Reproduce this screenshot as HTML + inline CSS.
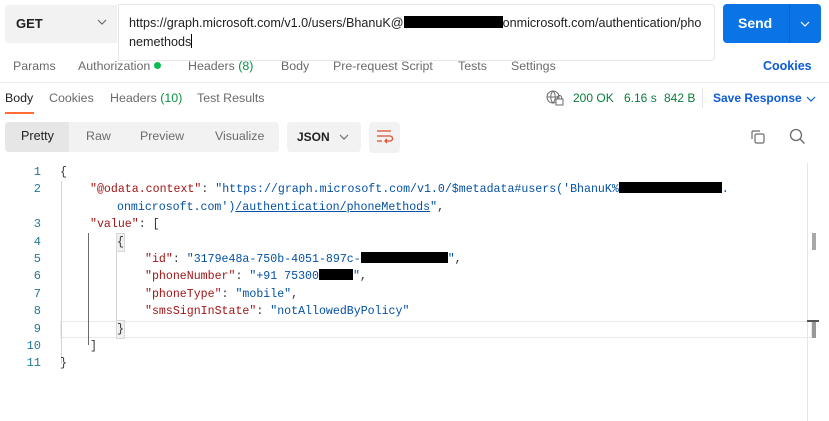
<!DOCTYPE html>
<html><head><meta charset="utf-8"><style>
*{margin:0;padding:0;box-sizing:border-box}
body{width:829px;height:421px;background:#fff;font-family:"Liberation Sans",sans-serif;position:relative;overflow:hidden;color:#212121}
.a{position:absolute;white-space:nowrap}
.t{font-size:12.4px;color:#6b6b6b}
.code{font-family:"Liberation Mono",monospace;font-size:11.6px;line-height:17.4px}
.ln{position:absolute;left:0;width:41px;text-align:right;color:#237893;font-family:"Liberation Mono",monospace;font-size:12px}
.k{color:#a31515}.s{color:#0451a5}.p{color:#333}
.blk{display:inline-block;background:#000;height:11px;vertical-align:-1px}
</style></head><body>
<div class="a" style="left:5px;top:5px;width:112px;height:38px;background:#f2f2f2;border-radius:4px 0 0 4px"></div>
<div class="a" style="left:16px;top:16px;font-size:13px;font-weight:bold;color:#212121">GET</div>
<svg class="a" style="left:97px;top:19px" width="10" height="6"><path d="M1 1l4 4 4-4" stroke="#6b6b6b" fill="none" stroke-width="1.2"/></svg>
<div class="a" style="left:118px;top:4px;width:597px;height:57px;border:1px solid #e6e6e6;border-radius:0 4px 4px 0;background:#fff"></div>
<div class="a" style="left:129px;top:16px;font-size:12.6px;color:#212121">https://graph.microsoft.com/v1.0/users/BhanuK@<span style="display:inline-block;width:99px;height:12px;background:#000;vertical-align:-1px"></span>onmicrosoft.com/authentication/pho</div>
<div class="a" style="left:129px;top:34px;font-size:12.6px;color:#212121">nemethods<span style="display:inline-block;width:1px;height:14px;background:#000;vertical-align:-2px"></span></div>
<div class="a" style="left:723px;top:4px;width:98px;height:39px;background:#0a74e6;border-radius:4px"></div>
<div class="a" style="left:789px;top:4px;width:1px;height:39px;background:#0a63c4"></div>
<div class="a" style="left:738px;top:15px;font-size:14px;font-weight:bold;color:#fff">Send</div>
<svg class="a" style="left:800px;top:21px" width="10" height="6"><path d="M1 1l4 4 4-4" stroke="#fff" fill="none" stroke-width="1.2"/></svg>
<div class="a t" style="left:13px;top:59px">Params</div>
<div class="a t" style="left:78px;top:59px">Authorization <span style="display:inline-block;width:7px;height:7px;border-radius:50%;background:#0cbb52;vertical-align:1px"></span></div>
<div class="a t" style="left:188px;top:59px">Headers <span style="color:#0a8f45">(8)</span></div>
<div class="a t" style="left:281px;top:59px">Body</div>
<div class="a t" style="left:333px;top:59px">Pre-request Script</div>
<div class="a t" style="left:458px;top:59px">Tests</div>
<div class="a t" style="left:511px;top:59px">Settings</div>
<div class="a" style="left:763px;top:59px;font-size:12.5px;font-weight:bold;color:#0b5cd5">Cookies</div>
<div class="a" style="left:0;top:82px;width:829px;height:1px;background:#ededed"></div>
<div class="a" style="left:5px;top:91px;font-size:12.4px;color:#212121">Body</div>
<div class="a" style="left:5px;top:112px;width:29px;height:2px;background:#ff6c37"></div>
<div class="a t" style="left:49px;top:91px">Cookies</div>
<div class="a t" style="left:110px;top:91px">Headers <span style="color:#0a8f45">(10)</span></div>
<div class="a t" style="left:197px;top:91px">Test Results</div>
<svg class="a" style="left:546px;top:90px" width="18" height="16" viewBox="0 0 18 16"><circle cx="7" cy="7" r="6" fill="none" stroke="#6b6b6b"/><path d="M1 7h12M7 1c-3 3-3 9 0 12M7 1c3 3 3 9 0 12" fill="none" stroke="#6b6b6b"/><rect x="10" y="9" width="7" height="6" fill="#fff" stroke="#6b6b6b"/><path d="M11.5 9V7.5a2 2 0 014 0V9" fill="none" stroke="#6b6b6b"/></svg>
<div class="a" style="left:573px;top:91px;font-size:12px;color:#0a7d3a">200 OK</div>
<div class="a" style="left:624px;top:91px;font-size:12px;color:#0a7d3a">6.16 s</div>
<div class="a" style="left:664px;top:91px;font-size:12px;color:#0a7d3a">842 B</div>
<div class="a" style="left:702px;top:88px;width:1px;height:20px;background:#e6e6e6"></div>
<div class="a" style="left:713px;top:91px;font-size:12px;font-weight:bold;color:#0b5cd5">Save Response</div>
<svg class="a" style="left:806px;top:96px" width="10" height="6"><path d="M1 1l4 4 4-4" stroke="#0b5cd5" fill="none" stroke-width="1.2"/></svg>
<div class="a" style="left:5px;top:122px;width:274px;height:30px;background:#f2f2f2;border-radius:4px"></div>
<div class="a" style="left:5px;top:122px;width:64px;height:30px;background:#e6e6e6;border-radius:4px 0 0 4px"></div>
<div class="a" style="left:21px;top:129px;font-size:12.6px;color:#212121">Pretty</div>
<div class="a t" style="left:86px;top:129px">Raw</div>
<div class="a t" style="left:140px;top:129px">Preview</div>
<div class="a t" style="left:215px;top:129px">Visualize</div>
<div class="a" style="left:287px;top:122px;width:74px;height:30px;background:#f2f2f2;border-radius:4px"></div>
<div class="a" style="left:297px;top:130px;font-size:12px;font-weight:bold;color:#212121">JSON</div>
<svg class="a" style="left:339px;top:134px" width="10" height="6"><path d="M1 1l4 4 4-4" stroke="#6b6b6b" fill="none" stroke-width="1.2"/></svg>
<div class="a" style="left:369px;top:122px;width:31px;height:31px;background:#f2f2f2;border-radius:4px"></div>
<svg class="a" style="left:376px;top:129px" width="17" height="16"><path d="M1 2h14M1 7h13a2.5 2.5 0 010 5H9M11 10l-2 2 2 2M1 12h5" stroke="#e0502a" fill="none" stroke-width="1.3"/></svg>
<svg class="a" style="left:750px;top:129px" width="16" height="16"><rect x="5" y="5" width="9" height="9" rx="1.5" fill="none" stroke="#6b6b6b" stroke-width="1.2"/><path d="M2 10V3a1 1 0 011-1h7" fill="none" stroke="#6b6b6b" stroke-width="1.2"/></svg>
<svg class="a" style="left:789px;top:128px" width="17" height="17"><circle cx="7" cy="7" r="5.5" fill="none" stroke="#6b6b6b" stroke-width="1.3"/><path d="M11 11l4.5 4.5" stroke="#6b6b6b" stroke-width="1.3"/></svg>
<div class="a" style="left:60px;top:321px;width:752px;height:17px;border:1px solid #eaeaea"></div>
<div class="a" style="left:61px;top:181px;width:1px;height:183px;background:#d4d4d4"></div>
<div class="a" style="left:88px;top:233px;width:1px;height:112px;background:#6b6b6b"></div>
<div class="a" style="left:116px;top:250px;width:1px;height:72px;background:#d4d4d4"></div>
<div class="a" style="left:807px;top:163px;width:1px;height:258px;background:#e6e6e6"></div>
<div class="a" style="left:812px;top:233px;width:4px;height:17px;background:#a8a8a8"></div>
<div class="a" style="left:807px;top:320px;width:12px;height:2px;background:#555"></div>
<div class="a" style="left:812px;top:322px;width:4px;height:16px;background:#999"></div>
<div class="a code" style="left:0;top:164px;width:829px">
<div style="position:relative;height:17.4px"><span class="ln">1</span><span class="a p" style="left:60px">{</span></div>
<div style="position:relative;height:17.4px"><span class="ln">2</span><span class="a" style="left:90px"><span class="k">"@odata.context"</span><span class="p">: </span><span class="s">"https://graph.microsoft.com/v1.0/$metadata#users('BhanuK%<span class="blk" style="width:103px"></span>.</span></span></div>
<div style="position:relative;height:17.4px"><span class="a" style="left:117px"><span class="s">onmicrosoft.com')<span style="text-decoration:underline">/authentication/phoneMethods</span>"</span><span class="p">,</span></span></div>
<div style="position:relative;height:17.4px"><span class="ln">3</span><span class="a" style="left:90px"><span class="k">"value"</span><span class="p">: [</span></span></div>
<div style="position:relative;height:17.4px"><span class="ln">4</span><span class="a p" style="left:117px;background:#f0f0f0;outline:1px solid #d8d8d8">{</span></div>
<div style="position:relative;height:17.4px"><span class="ln">5</span><span class="a" style="left:145px"><span class="k">"id"</span><span class="p">: </span><span class="s">"3179e48a-750b-4051-897c-<span class="blk" style="width:87px"></span>"</span><span class="p">,</span></span></div>
<div style="position:relative;height:17.4px"><span class="ln">6</span><span class="a" style="left:145px"><span class="k">"phoneNumber"</span><span class="p">: </span><span class="s">"+91 75300<span class="blk" style="width:34px"></span>"</span><span class="p">,</span></span></div>
<div style="position:relative;height:17.4px"><span class="ln">7</span><span class="a" style="left:145px"><span class="k">"phoneType"</span><span class="p">: </span><span class="s">"mobile"</span><span class="p">,</span></span></div>
<div style="position:relative;height:17.4px"><span class="ln">8</span><span class="a" style="left:145px"><span class="k">"smsSignInState"</span><span class="p">: </span><span class="s">"notAllowedByPolicy"</span></span></div>
<div style="position:relative;height:17.4px"><span class="ln">9</span><span class="a p" style="left:117px;background:#f0f0f0;outline:1px solid #d8d8d8">}</span></div>
<div style="position:relative;height:17.4px"><span class="ln">10</span><span class="a p" style="left:90px">]</span></div>
<div style="position:relative;height:17.4px"><span class="ln">11</span><span class="a p" style="left:60px">}</span></div>
</div>
</body></html>
